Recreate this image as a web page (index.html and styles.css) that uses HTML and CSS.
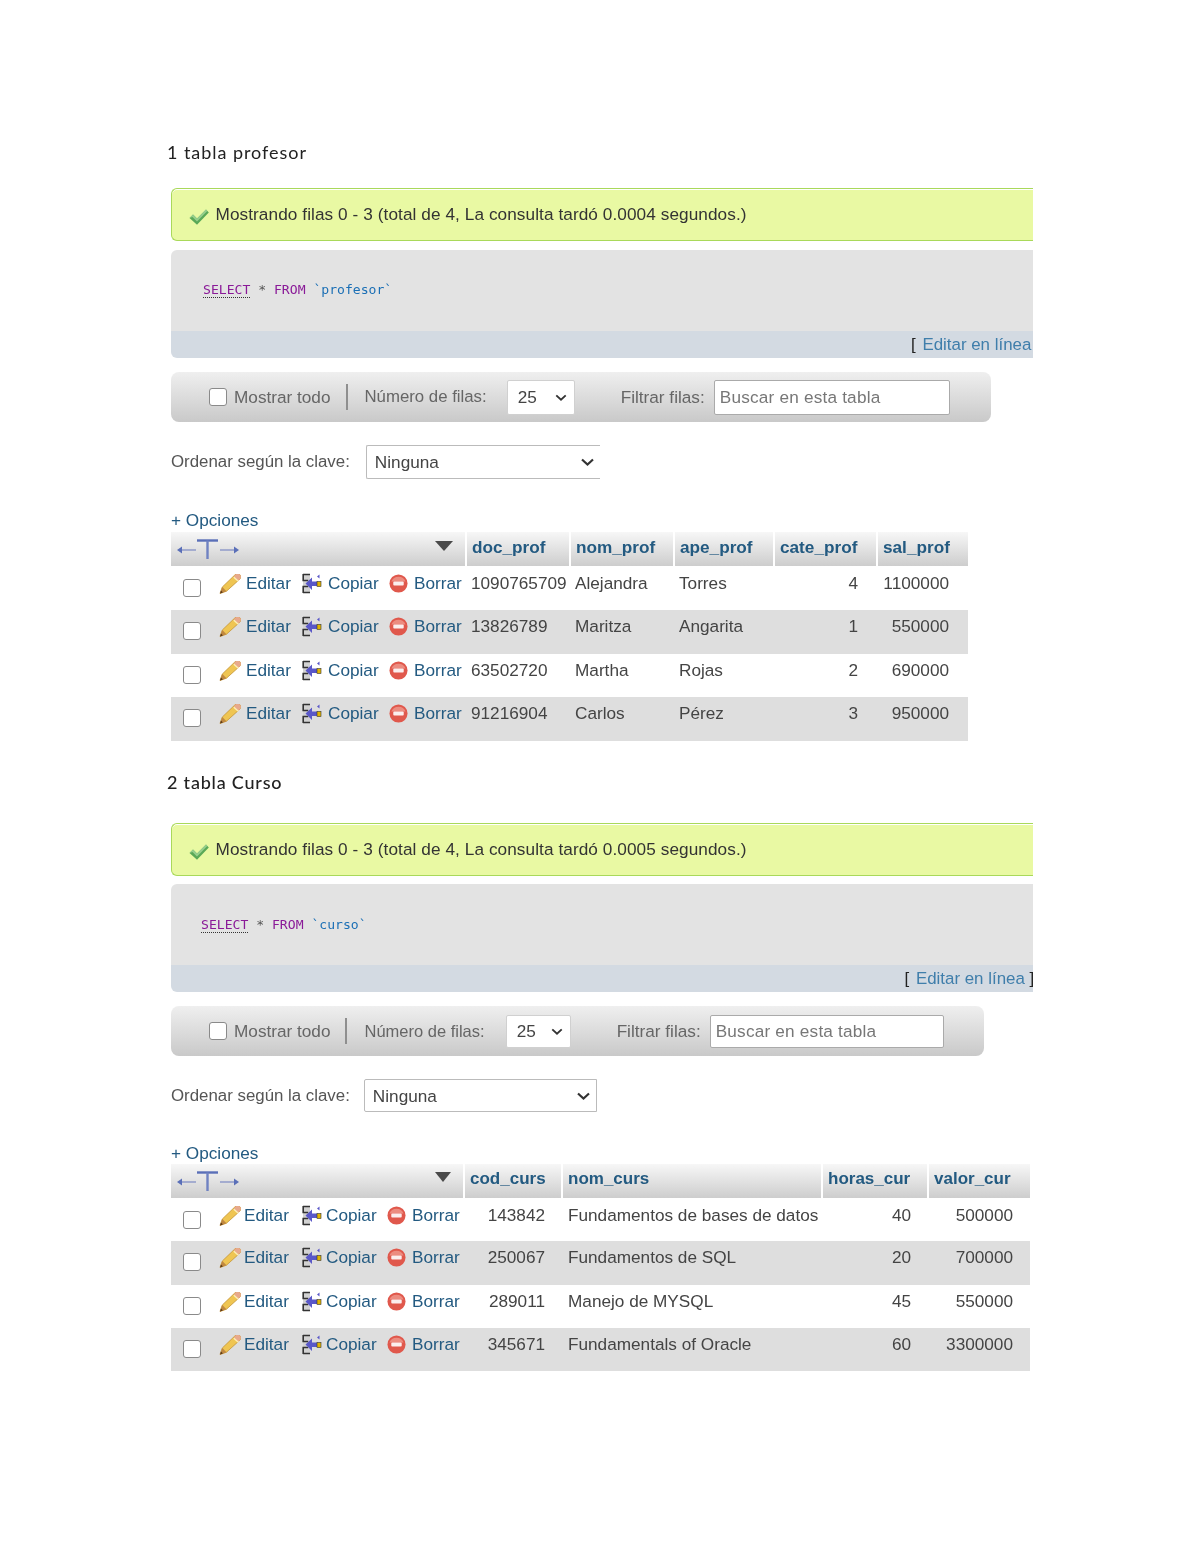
FILE: index.html
```html
<!DOCTYPE html>
<html lang="es">
<head>
<meta charset="utf-8">
<title>Tablas</title>
<link rel="stylesheet" href="styles.css">
</head>
<body>
<svg class="sprite" xmlns="http://www.w3.org/2000/svg">
  <symbol id="i-check" viewBox="0 0 20 16">
    <path d="M.5 9l3.500-3.500L8 9.500 17 .5l2.800 3L8 15.800z" fill="#5aa957"/>
    <path d="M.5 9l3.500-3.500L8 9.500 17 .5l1.300 1.400L8 12.500 3.500 8z" fill="#97cf8c"/>
  </symbol>
  <symbol id="i-pencil" viewBox="0 0 22 20">
    <path d="M16 .8a3 3 0 0 1 5 4.200L7.500 17.200 1 19.500l2.300-6.500z" fill="#efc552" stroke="#c4953a" stroke-width=".8"/>
    <path d="M15 3l4.500 4" stroke="#fbeeb4" stroke-width="2"/>
    <path d="M16.300 .8a3 3 0 0 1 4.700 4.200l-1.500 1.400-4.600-4.200z" fill="#e8a98c"/>
    <path d="M3.300 13l4.200 4.200L1 19.500z" fill="#c08840"/>
    <path d="M1 19.500l1-2.900 1.900 1.900z" fill="#5c3a1c"/>
  </symbol>
  <symbol id="i-copy" viewBox="0 0 20 21">
    <rect x="1" y="2" width="7" height="17" fill="#d2d2d2"/>
    <path d="M1 1.500h7M1 19.500h7M1.200 1v6.500h5M1.200 20v-6.500h5" fill="none" stroke="#333" stroke-width="1.600"/>
    <path d="M3.500 10.500L10 4.500v4h5v4.500h-5v4z" fill="#5a58c8"/>
    <rect x="15" y="8.500" width="4" height="5" fill="#e0b400" stroke="#333" stroke-width=".6"/>
    <path d="M17.500 1.500l-2.500 2 2.500 2z" fill="#5a58c8"/>
  </symbol>
  <symbol id="i-delete" viewBox="0 0 20 20">
    <circle cx="10" cy="10" r="9.500" fill="#e0584c"/>
    <path d="M2.500 8a8 8 0 0 1 15 0z" fill="#ec8c80"/>
    <rect x="4.500" y="8" width="11" height="4" rx="1" fill="#fbeeee"/>
  </symbol>
  <symbol id="i-resize" viewBox="0 0 62 22">
    <path d="M20 2.500h21" stroke="#5a6fb8" stroke-width="2.400" fill="none"/>
    <path d="M30.500 2.500V21" stroke="#6f82c2" stroke-width="2.400" fill="none"/>
    <path d="M19 12H4" stroke="#8a96c8" stroke-width="1.400" fill="none"/>
    <path d="M0 12l5-3.500v7z" fill="#5a6fb8"/>
    <path d="M43 12h15" stroke="#8a96c8" stroke-width="1.400" fill="none"/>
    <path d="M62 12l-5-3.500v7z" fill="#5a6fb8"/>
  </symbol>
</svg>

<main class="page">
  <section class="report report--profesor">
    <h2 class="report-title">1 tabla profesor</h2>
    <div class="message">
      <svg class="icon-check"><use href="#i-check"/></svg>
      <span>Mostrando filas 0 - 3 (total de 4, La consulta tardó 0.0004 segundos.)</span>
    </div>
    <div class="sql"><code><abbr class="kw kw-select">SELECT</abbr> <span class="star">*</span> <span class="kw">FROM</span> <span class="str">`profesor`</span></code></div>
    <div class="sql-bar"><span class="bracket">[</span> <a class="link">Editar en línea</a></div>

    <div class="toolbar">
      <input class="check" type="checkbox">
      <span class="tool-label tool-all">Mostrar todo</span>
      <span class="tool-sep"></span>
      <span class="tool-label tool-rows">Número de filas:</span>
      <select class="tool-select"><option>25</option></select>
      <span class="tool-label tool-filter">Filtrar filas:</span>
      <input class="tool-input" type="text" placeholder="Buscar en esta tabla">
    </div>

    <div class="order">
      <label class="order-label">Ordenar según la clave:</label>
      <select class="order-select"><option>Ninguna</option></select>
    </div>

    <a class="options link">+ Opciones</a>
    <table class="grid">
      <colgroup><col class="c-act"><col class="c-a"><col class="c-b"><col class="c-c"><col class="c-d"><col class="c-e"></colgroup>
      <thead>
        <tr>
          <th class="th-tools"><div class="head-tools"><svg class="icon-resize"><use href="#i-resize"/></svg><span class="sort"></span></div></th>
          <th>doc_prof</th><th>nom_prof</th><th>ape_prof</th><th>cate_prof</th><th>sal_prof</th>
        </tr>
      </thead>
      <tbody>
        <tr>
          <td><div class="actions"><input class="check" type="checkbox"><svg class="icon-pencil"><use href="#i-pencil"/></svg><a class="link act-edit">Editar</a><svg class="icon-copy"><use href="#i-copy"/></svg><a class="link act-copy">Copiar</a><svg class="icon-delete"><use href="#i-delete"/></svg><a class="link">Borrar</a></div></td>
          <td>1090765709</td><td>Alejandra</td><td>Torres</td><td class="num">4</td><td class="num">1100000</td>
        </tr>
        <tr>
          <td><div class="actions"><input class="check" type="checkbox"><svg class="icon-pencil"><use href="#i-pencil"/></svg><a class="link act-edit">Editar</a><svg class="icon-copy"><use href="#i-copy"/></svg><a class="link act-copy">Copiar</a><svg class="icon-delete"><use href="#i-delete"/></svg><a class="link">Borrar</a></div></td>
          <td>13826789</td><td>Maritza</td><td>Angarita</td><td class="num">1</td><td class="num">550000</td>
        </tr>
        <tr>
          <td><div class="actions"><input class="check" type="checkbox"><svg class="icon-pencil"><use href="#i-pencil"/></svg><a class="link act-edit">Editar</a><svg class="icon-copy"><use href="#i-copy"/></svg><a class="link act-copy">Copiar</a><svg class="icon-delete"><use href="#i-delete"/></svg><a class="link">Borrar</a></div></td>
          <td>63502720</td><td>Martha</td><td>Rojas</td><td class="num">2</td><td class="num">690000</td>
        </tr>
        <tr>
          <td><div class="actions"><input class="check" type="checkbox"><svg class="icon-pencil"><use href="#i-pencil"/></svg><a class="link act-edit">Editar</a><svg class="icon-copy"><use href="#i-copy"/></svg><a class="link act-copy">Copiar</a><svg class="icon-delete"><use href="#i-delete"/></svg><a class="link">Borrar</a></div></td>
          <td>91216904</td><td>Carlos</td><td>Pérez</td><td class="num">3</td><td class="num">950000</td>
        </tr>
      </tbody>
    </table>
  </section>

  <section class="report report--curso">
    <h2 class="report-title">2 tabla Curso</h2>
    <div class="message">
      <svg class="icon-check"><use href="#i-check"/></svg>
      <span>Mostrando filas 0 - 3 (total de 4, La consulta tardó 0.0005 segundos.)</span>
    </div>
    <div class="sql"><code><abbr class="kw kw-select">SELECT</abbr> <span class="star">*</span> <span class="kw">FROM</span> <span class="str">`curso`</span></code></div>
    <div class="sql-bar"><span class="bracket">[</span> <a class="link">Editar en línea</a> <span class="bracket">]</span></div>

    <div class="toolbar">
      <input class="check" type="checkbox">
      <span class="tool-label tool-all">Mostrar todo</span>
      <span class="tool-sep"></span>
      <span class="tool-label tool-rows">Número de filas:</span>
      <select class="tool-select"><option>25</option></select>
      <span class="tool-label tool-filter">Filtrar filas:</span>
      <input class="tool-input" type="text" placeholder="Buscar en esta tabla">
    </div>

    <div class="order">
      <label class="order-label">Ordenar según la clave:</label>
      <select class="order-select"><option>Ninguna</option></select>
    </div>

    <a class="options link">+ Opciones</a>
    <table class="grid">
      <colgroup><col class="c-act"><col class="c-a"><col class="c-b"><col class="c-c"><col class="c-d"></colgroup>
      <thead>
        <tr>
          <th class="th-tools"><div class="head-tools"><svg class="icon-resize"><use href="#i-resize"/></svg><span class="sort"></span></div></th>
          <th>cod_curs</th><th>nom_curs</th><th>horas_cur</th><th>valor_cur</th>
        </tr>
      </thead>
      <tbody>
        <tr>
          <td><div class="actions"><input class="check" type="checkbox"><svg class="icon-pencil"><use href="#i-pencil"/></svg><a class="link act-edit">Editar</a><svg class="icon-copy"><use href="#i-copy"/></svg><a class="link act-copy">Copiar</a><svg class="icon-delete"><use href="#i-delete"/></svg><a class="link">Borrar</a></div></td>
          <td class="num">143842</td><td>Fundamentos de bases de datos</td><td class="num">40</td><td class="num">500000</td>
        </tr>
        <tr>
          <td><div class="actions"><input class="check" type="checkbox"><svg class="icon-pencil"><use href="#i-pencil"/></svg><a class="link act-edit">Editar</a><svg class="icon-copy"><use href="#i-copy"/></svg><a class="link act-copy">Copiar</a><svg class="icon-delete"><use href="#i-delete"/></svg><a class="link">Borrar</a></div></td>
          <td class="num">250067</td><td>Fundamentos de SQL</td><td class="num">20</td><td class="num">700000</td>
        </tr>
        <tr>
          <td><div class="actions"><input class="check" type="checkbox"><svg class="icon-pencil"><use href="#i-pencil"/></svg><a class="link act-edit">Editar</a><svg class="icon-copy"><use href="#i-copy"/></svg><a class="link act-copy">Copiar</a><svg class="icon-delete"><use href="#i-delete"/></svg><a class="link">Borrar</a></div></td>
          <td class="num">289011</td><td>Manejo de MYSQL</td><td class="num">45</td><td class="num">550000</td>
        </tr>
        <tr>
          <td><div class="actions"><input class="check" type="checkbox"><svg class="icon-pencil"><use href="#i-pencil"/></svg><a class="link act-edit">Editar</a><svg class="icon-copy"><use href="#i-copy"/></svg><a class="link act-copy">Copiar</a><svg class="icon-delete"><use href="#i-delete"/></svg><a class="link">Borrar</a></div></td>
          <td class="num">345671</td><td>Fundamentals of Oracle</td><td class="num">60</td><td class="num">3300000</td>
        </tr>
      </tbody>
    </table>
  </section>
</main>
</body>
</html>
```

FILE: styles.css
```css
* { box-sizing: border-box; }

html, body {
  margin: 0;
  background: #fff;
}

body {
  min-height: 1553px;
  font-family: "Liberation Sans", Arial, sans-serif;
  font-size: 17.2px;
  color: #444;
}

.sprite {
  display: none;
}

.page {
  width: 862px;
  margin-left: 171px;
  padding-top: 140px;
  filter: blur(0.45px);
}

.report--curso {
  margin-top: 29px;
}

.report-title {
  margin: 0 0 24px -4px;
  font-family: Lato, "Open Sans", sans-serif;
  font-size: 18px;
  font-weight: 400;
  line-height: 24px;
  letter-spacing: 0.95px;
  color: #222;
}

.report--curso .report-title {
  margin-bottom: 29px;
  font-weight: 500;
  letter-spacing: 0.8px;
}

.link {
  color: #235a81;
}

/* message */
.message {
  display: flex;
  align-items: center;
  height: 53px;
  padding-left: 16.500px;
  background: #e9f9a3;
  border: 1.500px solid #a9d95a;
  border-right: 0;
  border-radius: 6px 0 0 6px;
  box-shadow: inset 0 1px 0 #fff;
  color: #333;
  letter-spacing: 0.08px;
  white-space: nowrap;
}

.icon-check {
  width: 20px;
  height: 16px;
  margin: 4px 7px 0 0;
  flex: none;
}

/* sql */
.sql {
  height: 81px;
  margin-top: 9px;
  padding: 28px 0 0 32px;
  background: #e3e3e3;
  border-radius: 6px 0 0 0;
}

.report--curso .sql {
  margin-top: 8px;
  padding: 29px 0 0 30px;
}

.sql code {
  font-family: "DejaVu Sans Mono", "Liberation Mono", monospace;
  font-size: 13.1px;
  line-height: 18px;
}

.kw {
  color: #8a1a98;
}

.kw-select {
  border-bottom: 1px dotted #333;
}

.star {
  color: #555;
}

.str {
  color: #1b6fb5;
}

.sql-bar {
  height: 27px;
  overflow: hidden;
  padding-left: 740px;
  background: #d3dae2;
  border-radius: 0 0 0 6px;
  font-size: 16.9px;
  line-height: 27px;
  white-space: nowrap;
}

.report--curso .sql-bar {
  padding-left: 733.500px;
}

.sql-bar .link {
  margin-left: 2px;
  color: #3f7eab;
}

.bracket {
  color: #222;
}

/* toolbar */
.toolbar {
  display: flex;
  align-items: center;
  width: 820px;
  height: 50px;
  margin-top: 14px;
  padding-left: 38px;
  background: linear-gradient(#efefef, #c9c9c9);
  border-radius: 8px;
  color: #666;
}

.report--curso .toolbar {
  width: 813px;
}

.tool-all {
  margin-left: 7px;
}

.tool-sep {
  width: 2px;
  height: 26px;
  margin: 0 16px;
  background: #8f8f8f;
}

.report--curso .tool-sep {
  margin: 0 17px 0 15px;
}

.tool-rows {
  font-size: 16.8px;
}

.report--curso .tool-rows {
  font-size: 16.5px;
}

.tool-select,
.order-select {
  appearance: none;
  background-color: #fff;
  background-image: url("data:image/svg+xml,%3Csvg xmlns='http://www.w3.org/2000/svg' viewBox='0 0 14 8'%3E%3Cpath d='M1.500 1.500L7 6.500l5.500-5' fill='none' stroke='%23333' stroke-width='2.200'/%3E%3C/svg%3E");
  background-repeat: no-repeat;
  font: inherit;
  color: #444;
}

.tool-select {
  width: 68px;
  height: 35px;
  margin-left: 20px;
  padding-left: 10px;
  background-position: right 7px center;
  background-size: 12px 7px;
  border: 1px solid #d0d0d0;
  border-radius: 2px;
}

.report--curso .tool-select {
  width: 65px;
  height: 33px;
  margin-left: 21px;
}

.tool-filter {
  margin-left: 46px;
}

.tool-input {
  width: 236px;
  height: 35px;
  margin-left: 9px;
  padding: 0 5px;
  background: #fff;
  border: 1px solid #aaa;
  border-radius: 2px;
  font: inherit;
  letter-spacing: 0.2px;
}

.report--curso .tool-input {
  width: 234px;
  height: 33px;
}

.tool-input::placeholder {
  color: #777;
  opacity: 1;
}

/* checkbox */
.check {
  appearance: none;
  flex: none;
  width: 18px;
  height: 18px;
  margin: 0;
  background: #fff;
  border: 1.500px solid #8a8a8a;
  border-radius: 3px;
}

/* order */
.order {
  display: flex;
  align-items: center;
  height: 34px;
  margin-top: 23px;
}

.report--curso .order {
  height: 33px;
}

.order-label {
  color: #555;
  font-size: 16.85px;
  white-space: nowrap;
}

.order-select {
  width: 234px;
  height: 100%;
  margin-left: 16px;
  padding-left: 8px;
  background-position: right 5px center;
  background-size: 15px 8px;
  border: 1px solid #bbb;
  border-right: 0;
  border-radius: 2px 0 0 2px;
}

.report--curso .order-select {
  width: 233px;
  margin-left: 14px;
  border-right: 1px solid #bbb;
}

/* options */
.options {
  display: block;
  height: 20px;
  margin: 31px 0 2px;
  line-height: 20px;
}

.report--curso .options {
  margin-bottom: 1px;
}

/* data table */
.grid {
  table-layout: fixed;
  border-collapse: collapse;
  width: 797px;
}

.report--curso .grid {
  width: 859px;
}

.report--profesor .c-act { width: 295px; }
.report--profesor .c-a { width: 104px; }
.report--profesor .c-b { width: 104px; }
.report--profesor .c-c { width: 100px; }
.report--profesor .c-d { width: 103px; }
.report--profesor .c-e { width: 91px; }

.report--curso .c-act { width: 293px; }
.report--curso .c-a { width: 98px; }
.report--curso .c-b { width: 260px; }
.report--curso .c-c { width: 106px; }
.report--curso .c-d { width: 102px; }

.grid th {
  height: 34px;
  padding: 0 0 4px 5px;
  background: linear-gradient(#f7f7f7, #cdcdcd);
  border-left: 2px solid #fff;
  color: #235a81;
  font-weight: 700;
  text-align: left;
  white-space: nowrap;
  overflow: hidden;
}

.report--curso .grid th {
  font-size: 17px;
}

.grid .th-tools {
  padding: 0;
  border-left: 0;
  vertical-align: top;
}

.head-tools {
  display: flex;
  align-items: flex-start;
  justify-content: space-between;
  padding: 6px 12px 0 6px;
}

.report--curso .head-tools {
  padding-right: 12px;
}

.icon-resize {
  width: 62px;
  height: 22px;
}

.sort {
  width: 0;
  height: 0;
  margin-top: 3px;
  border-left: 9px solid transparent;
  border-right: 9px solid transparent;
  border-top: 10px solid #4a4a4a;
}

.report--curso .sort {
  border-left-width: 8px;
  border-right-width: 8px;
  margin-top: 2px;
}

.grid td {
  height: 43.750px;
  padding: 6px 0 0 5px;
  vertical-align: top;
  line-height: 20px;
  white-space: nowrap;
  overflow: hidden;
}

.report--curso .grid td {
  height: 43.250px;
  padding-left: 6px;
}

.grid tbody tr:first-child td {
  padding-top: 7px;
}

.grid tbody tr:nth-child(even) td {
  background: #dedede;
}

.grid .num {
  padding-right: 19px;
  padding-left: 0;
  text-align: right;
}

.report--curso .grid .num {
  padding-right: 17px;
  padding-left: 0;
}

.grid td:first-child {
  padding-left: 12px;
}

.report--curso .grid td:first-child {
  padding-left: 12px;
}

.actions {
  display: flex;
  align-items: flex-start;
  height: 30px;
}

.actions .check {
  margin: 6px 18px 0 0;
}

.icon-pencil {
  flex: none;
  width: 22px;
  height: 20px;
  margin: 1px 5px 0 0;
}

.act-edit {
  width: 56px;
}

.icon-copy {
  flex: none;
  width: 20px;
  height: 21px;
  margin-right: 6px;
}

.act-copy {
  width: 61px;
}

.icon-delete {
  flex: none;
  width: 19px;
  height: 19px;
  margin: 1px 6px 0 0;
}

.report--curso .act-edit {
  width: 58px;
}

.report--curso .icon-pencil {
  margin-right: 3px;
}

.report--curso .icon-copy {
  margin-right: 4px;
}
```
